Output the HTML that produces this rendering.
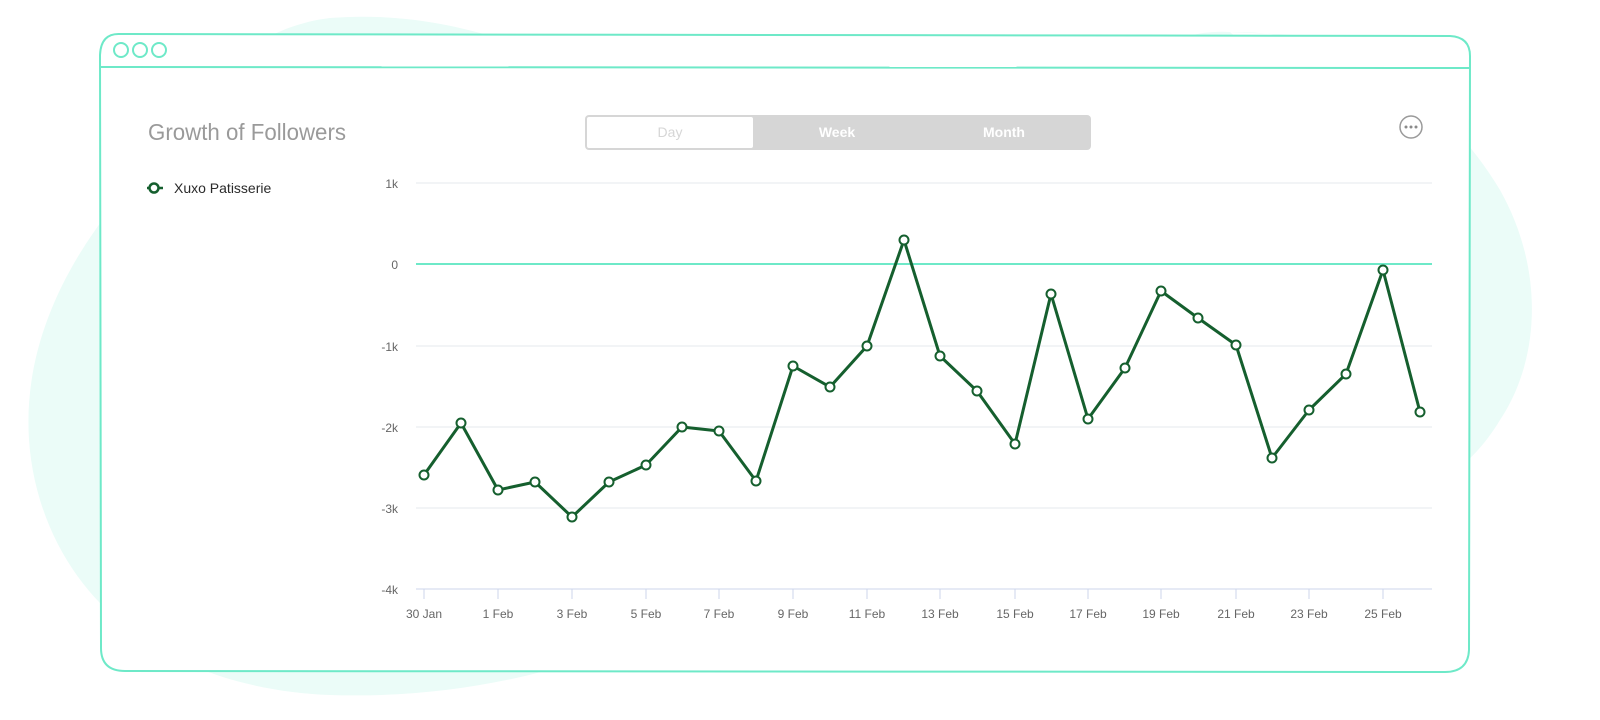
<!DOCTYPE html>
<html><head><meta charset="utf-8"><style>
html,body{margin:0;padding:0;background:#fff;width:1600px;height:720px;overflow:hidden;font-family:"Liberation Sans",sans-serif}
</style></head><body>
<svg width="1600" height="720" viewBox="0 0 1600 720" xmlns="http://www.w3.org/2000/svg" style="position:absolute;left:0;top:0">
<!-- blobs -->
<path d="M330 18 C430 10 520 40 600 80 L700 600 C620 660 480 700 330 695 C200 690 80 630 40 500 C10 400 40 300 110 210 C170 120 230 30 330 18 Z" fill="#ebfcf8"/>
<path d="M1230 32 C1340 30 1440 90 1500 190 C1545 270 1540 360 1500 420 C1470 470 1430 490 1400 500 L1400 40 Z" fill="#ebfcf8"/>
<path d="M1140 60 C1160 40 1200 30 1230 32 L1260 60 Z" fill="#ebfcf8"/>
<!-- window -->
<path d="M120 34 L1450 36 Q1470 37 1470 56 L1469 650 Q1468 672 1445 672 L125 671 Q101 671 101 648 L100 55 Q101 33 120 34 Z" fill="#fff" stroke="#6ee9c8" stroke-width="2"/>
<line x1="100" y1="67" x2="1470" y2="68" stroke="#6ee9c8" stroke-width="2"/>
<circle cx="121" cy="50" r="7" fill="none" stroke="#6ee9c8" stroke-width="2"/>
<circle cx="140" cy="50" r="7" fill="none" stroke="#6ee9c8" stroke-width="2"/>
<circle cx="159" cy="50" r="7" fill="none" stroke="#6ee9c8" stroke-width="2"/>
<!-- title -->
<text x="148" y="140" font-size="23" fill="#9a9a9a" textLength="198" lengthAdjust="spacingAndGlyphs">Growth of Followers</text>
<!-- legend -->
<line x1="147" y1="188" x2="163" y2="188" stroke="#155f2e" stroke-width="2.5"/>
<circle cx="154" cy="188" r="4.5" fill="#fff" stroke="#155f2e" stroke-width="2.5"/>
<text x="174" y="193" font-size="14" fill="#2a2a2a">Xuxo Patisserie</text>
<!-- segmented -->
<rect x="585" y="115" width="506" height="35" rx="4" fill="#d6d6d6"/>
<rect x="587" y="117" width="166" height="31" rx="2" fill="#fff"/>
<g font-size="14" fill="#fff" text-anchor="middle" font-weight="bold">
<text x="670" y="137" fill="#d6d6d6" font-weight="normal">Day</text>
<text x="837" y="137">Week</text>
<text x="1004" y="137">Month</text>
</g>
<!-- more icon -->
<circle cx="1411" cy="127" r="11" fill="#fff" stroke="#9a9a9a" stroke-width="1.5"/>
<circle cx="1406" cy="127" r="1.5" fill="#8a8a8a"/><circle cx="1411" cy="127" r="1.5" fill="#8a8a8a"/><circle cx="1416" cy="127" r="1.5" fill="#8a8a8a"/>
<!-- grid -->
<g stroke="#e6e8ee" stroke-width="1">
<line x1="416" y1="183" x2="1432" y2="183"/>
<line x1="416" y1="346" x2="1432" y2="346"/>
<line x1="416" y1="427" x2="1432" y2="427"/>
<line x1="416" y1="508" x2="1432" y2="508"/>
</g>
<line x1="416" y1="589" x2="1432" y2="589" stroke="#ccd6eb" stroke-width="1"/>
<line x1="416" y1="264" x2="1432" y2="264" stroke="#6ee9c8" stroke-width="2"/>
<g font-size="12" fill="#666" text-anchor="end">
<text x="398" y="188">1k</text><text x="398" y="269">0</text><text x="398" y="351">-1k</text>
<text x="398" y="432">-2k</text><text x="398" y="513">-3k</text><text x="398" y="594">-4k</text>
</g>
<g stroke="#ccd6eb" stroke-width="1">
<line x1="424" y1="589" x2="424" y2="599"/><line x1="498" y1="589" x2="498" y2="599"/><line x1="572" y1="589" x2="572" y2="599"/><line x1="646" y1="589" x2="646" y2="599"/><line x1="719" y1="589" x2="719" y2="599"/><line x1="793" y1="589" x2="793" y2="599"/><line x1="867" y1="589" x2="867" y2="599"/><line x1="940" y1="589" x2="940" y2="599"/><line x1="1015" y1="589" x2="1015" y2="599"/><line x1="1088" y1="589" x2="1088" y2="599"/><line x1="1161" y1="589" x2="1161" y2="599"/><line x1="1236" y1="589" x2="1236" y2="599"/><line x1="1309" y1="589" x2="1309" y2="599"/><line x1="1383" y1="589" x2="1383" y2="599"/>
</g>
<g font-size="12" fill="#666" text-anchor="middle">
<text x="424" y="618">30 Jan</text><text x="498" y="618">1 Feb</text><text x="572" y="618">3 Feb</text><text x="646" y="618">5 Feb</text><text x="719" y="618">7 Feb</text><text x="793" y="618">9 Feb</text><text x="867" y="618">11 Feb</text><text x="940" y="618">13 Feb</text><text x="1015" y="618">15 Feb</text><text x="1088" y="618">17 Feb</text><text x="1161" y="618">19 Feb</text><text x="1236" y="618">21 Feb</text><text x="1309" y="618">23 Feb</text><text x="1383" y="618">25 Feb</text>
</g>
<polyline fill="none" stroke="#155f2e" stroke-width="3" stroke-linejoin="round" points="424,475 461,423 498,490 535,482 572,517 609,482 646,465 682,427 719,431 756,481 793,366 830,387 867,346 904,240 940,356 977,391 1015,444 1051,294 1088,419 1125,368 1161,291 1198,318 1236,345 1272,458 1309,410 1346,374 1383,270 1420,412"/>
<g fill="#fff" stroke="#155f2e" stroke-width="2">
<circle cx="424" cy="475" r="4.5"/><circle cx="461" cy="423" r="4.5"/><circle cx="498" cy="490" r="4.5"/><circle cx="535" cy="482" r="4.5"/><circle cx="572" cy="517" r="4.5"/><circle cx="609" cy="482" r="4.5"/><circle cx="646" cy="465" r="4.5"/><circle cx="682" cy="427" r="4.5"/><circle cx="719" cy="431" r="4.5"/><circle cx="756" cy="481" r="4.5"/><circle cx="793" cy="366" r="4.5"/><circle cx="830" cy="387" r="4.5"/><circle cx="867" cy="346" r="4.5"/><circle cx="904" cy="240" r="4.5"/><circle cx="940" cy="356" r="4.5"/><circle cx="977" cy="391" r="4.5"/><circle cx="1015" cy="444" r="4.5"/><circle cx="1051" cy="294" r="4.5"/><circle cx="1088" cy="419" r="4.5"/><circle cx="1125" cy="368" r="4.5"/><circle cx="1161" cy="291" r="4.5"/><circle cx="1198" cy="318" r="4.5"/><circle cx="1236" cy="345" r="4.5"/><circle cx="1272" cy="458" r="4.5"/><circle cx="1309" cy="410" r="4.5"/><circle cx="1346" cy="374" r="4.5"/><circle cx="1383" cy="270" r="4.5"/><circle cx="1420" cy="412" r="4.5"/>
</g>
</svg>
</body></html>
